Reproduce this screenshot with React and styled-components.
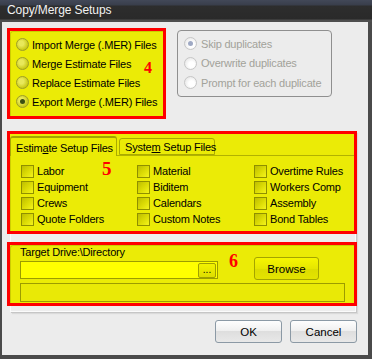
import styled, { createGlobalStyle } from 'styled-components'

const GlobalStyle = createGlobalStyle`
	html, body {
		margin: 0;
		padding: 0;
		background: #ececec;
	}
	body {
		font-family: "Liberation Sans", Arial, sans-serif;
		font-size: 11px;
		letter-spacing: -0.2px;
		color: #000;
	}
	* {
		box-sizing: border-box;
	}
`

const Window = styled.div`
	width: 372px;
	height: 359px;
	display: flex;
	flex-direction: column;
	background: #ececec;
	overflow: hidden;
`

const TitleBar = styled.div`
	height: 22px;
	flex: none;
	display: flex;
	align-items: center;
	padding: 0 0 2px 7px;
	background: linear-gradient(#424858 0, #393e4b 5px, #2d2d2d 6px, #2a2a2a 19px, #4e4e4e 20px, #4e4e4e 22px);
	color: #f2f2f2;
	font-size: 12px;
	letter-spacing: -0.1px;
`

const Frame = styled.div`
	flex: 1;
	display: flex;
	flex-direction: column;
	padding: 6px 11px 0 5px;
	border-left: 2px solid #4a4a4a;
	border-right: 4px solid #4a4a4a;
	border-bottom: 4px solid #4a4a4a;
`

const TopRow = styled.div`
	display: flex;
	gap: 11px;
	align-items: flex-start;
`

const RedBox = styled.div`
	position: relative;
	border: 3px solid #ff0000;
	background: #ebeb06;
	height: ${p => p.$h}px;
	width: ${p => (p.$w ? `${p.$w}px` : 'auto')};
	margin-top: ${p => p.$mt || 0}px;
`

const Marker = styled.span`
	position: absolute;
	left: ${p => p.$x}px;
	top: ${p => p.$y}px;
	font-family: "Liberation Serif", "Times New Roman", serif;
	font-weight: bold;
	font-size: ${p => p.$size}px;
	line-height: 1;
	letter-spacing: 0;
	color: #ff0000;
`

const YellowGroup = styled.div`
	height: 100%;
	border-top: 1px solid #cdcd00;
	border-left: 1px solid #cdcd00;
	border-top-left-radius: 3px;
	padding: ${p => p.$pad};
	display: flex;
	flex-direction: column;
`

const GreyGroup = styled.div`
	margin-top: 2px;
	width: 155px;
	height: 67px;
	border: 1px solid #8f8f8f;
	border-radius: 4px;
	padding: 3px 0 0 6px;
	display: flex;
	flex-direction: column;
`

const OptionRow = styled.label`
	height: ${p => p.$h}px;
	display: flex;
	align-items: center;
	gap: ${p => p.$gap}px;
	color: ${p => (p.$disabled ? '#a2a29a' : '#000')};
	white-space: nowrap;
`

const Radio = styled.span`
	width: 13px;
	height: 13px;
	flex: none;
	border-radius: 50%;
	display: flex;
	align-items: center;
	justify-content: center;
	border: 1px solid ${p => (p.$disabled ? '#c6c6c6' : '#9d9d2c')};
	background: ${p =>
		p.$disabled
			? 'radial-gradient(circle at 60% 60%, #ffffff 30%, #e2e2e2 90%)'
			: 'radial-gradient(circle at 40% 40%, #e8e85a 25%, #c2c208 80%)'};

	&::after {
		content: "";
		display: ${p => (p.$checked ? 'block' : 'none')};
		width: 5px;
		height: 5px;
		border-radius: 50%;
		background: ${p => (p.$disabled ? '#9fa9c4' : '#3b5012')};
	}
`

const Panel = styled.div`
	margin: 12px 0 0 3px;
	width: 346px;
	border: 1px solid #fbfbfb;
	border-top: none;
	box-shadow: 1px 1px 0 #c6c6c6, 2px 2px 1px #dadada;
	padding-bottom: 5px;
	background: #eeeeee;
`

const PanelRed = styled(RedBox)`
	margin-left: -4px;
	margin-right: -2px;
	margin-top: ${p => p.$mt || 0}px;
`

const TabStrip = styled.div`
	height: 21px;
	display: flex;
	align-items: flex-end;
	gap: 2px;
`

const Tab = styled.div`
	position: relative;
	z-index: ${p => (p.$active ? 1 : 0)};
	width: ${p => p.$w}px;
	height: ${p => (p.$active ? 20 : 17)}px;
	margin-bottom: ${p => (p.$active ? -1 : 0)}px;
	padding: ${p => (p.$active ? '1px 0 0 5px' : '0 0 0 5px')};
	display: flex;
	align-items: center;
	background: #ebeb06;
	border: 1px solid #aaaa00;
	border-top: ${p => (p.$active ? '2px solid #a3a300' : '1px solid #aaaa00')};
	border-bottom: ${p => (p.$active ? 'none' : '1px solid #aaaa00')};
	border-radius: 3px 3px 0 0;
	white-space: nowrap;

	u {
		text-decoration: underline;
		text-underline-offset: 1px;
	}
`

const TabPanel = styled.div`
	height: 76px;
	border-top: 1px solid #b2b200;
	border-left: 1px solid #cfcf00;
	padding: 7px 0 0 10px;
	display: grid;
	grid-template-columns: 116px 117px 1fr;
	grid-template-rows: repeat(4, 16px);
	grid-auto-flow: column;
`

const Check = styled.span`
	width: 13px;
	height: 13px;
	flex: none;
	border: 1px solid #8f8f00;
	background: linear-gradient(135deg, #bebe00 0%, #dada04 50%, #f4f41c 100%);
`

const TargetGroup = styled(YellowGroup)`
	padding: 0 0 0 9px;
`

const FieldLabel = styled.div`
	height: 11px;
	line-height: 12px;
`

const InputRow = styled.div`
	height: 23px;
	display: flex;
	align-items: flex-start;
`

const PathInput = styled.div`
	margin-top: 4px;
	width: 198px;
	height: 18px;
	border: 1px solid #9c9c00;
	background: #ffff00;
	display: flex;
	align-items: center;
	justify-content: flex-end;
	padding-right: 1px;
`

const DotsButton = styled.div`
	width: 18px;
	height: 15px;
	border: 1px solid #a0a000;
	border-radius: 2px;
	background: linear-gradient(#f2f200, #dede00);
	display: flex;
	align-items: flex-end;
	justify-content: center;
	padding-bottom: 2px;
	font-size: 10px;
	line-height: 1;
	letter-spacing: 0;
`

const Button = styled.div`
	width: ${p => p.$w}px;
	height: 23px;
	margin-left: ${p => p.$ml || 0}px;
	display: flex;
	align-items: center;
	justify-content: center;
	border-radius: 3px;
	border: 1px solid ${p => (p.$yellow ? '#a4a400' : '#8b99a5')};
	background: ${p =>
		p.$yellow
			? 'linear-gradient(#f6f600, #e6e600 50%, #dcdc00 51%, #e4e400)'
			: 'linear-gradient(#fefefe, #f0f0f0 45%, #dedede 50%, #e8e8e8)'};
	font-size: 11.5px;
	letter-spacing: 0;
`

const StatusField = styled.div`
	margin-top: 3px;
	width: 325px;
	height: 19px;
	border: 1px solid #9c9c00;
	background: #e9e906;
`

const ButtonRow = styled.div`
	margin-top: 8px;
	display: flex;
	justify-content: flex-end;
	gap: 8px;
`

const mergeOptions = [
	'Import Merge (.MER) Files',
	'Merge Estimate Files',
	'Replace Estimate Files',
	'Export Merge (.MER) Files',
]

const duplicateOptions = ['Skip duplicates', 'Overwrite duplicates', 'Prompt for each duplicate']

const setupFiles = [
	'Labor', 'Equipment', 'Crews', 'Quote Folders',
	'Material', 'Biditem', 'Calendars', 'Custom Notes',
	'Overtime Rules', 'Workers Comp', 'Assembly', 'Bond Tables',
]

export default function App() {
	return (
		<Window>
			<GlobalStyle />
			<TitleBar>Copy/Merge Setups</TitleBar>
			<Frame>
				<TopRow>
					<RedBox $w={159} $h={91}>
						<YellowGroup $pad="3px 0 0 5px">
							{mergeOptions.map((o, i) => (
								<OptionRow key={o} $h={19} $gap={3}>
									<Radio $checked={i === 3} />
									{o}
								</OptionRow>
							))}
						</YellowGroup>
						<Marker $x={134} $y={29} $size={16}>4</Marker>
					</RedBox>

					<GreyGroup>
						{duplicateOptions.map((o, i) => (
							<OptionRow key={o} $h={19.5} $gap={4} $disabled>
								<Radio $disabled $checked={i === 0} />
								{o}
							</OptionRow>
						))}
					</GreyGroup>
				</TopRow>

				<Panel>
					<PanelRed $h={103}>
						<TabStrip>
							<Tab $active $w={107}><span>Estim<u>a</u>te Setup Files</span></Tab>
							<Tab $w={96}><span>Syste<u>m</u> Setup Files</span></Tab>
						</TabStrip>
						<TabPanel>
							{setupFiles.map(f => (
								<OptionRow key={f} $h={16} $gap={3}>
									<Check />
									{f}
								</OptionRow>
							))}
						</TabPanel>
						<Marker $x={92} $y={25} $size={19}>5</Marker>
					</PanelRed>

					<PanelRed $h={64} $mt={8}>
						<TargetGroup>
							<FieldLabel>Target Drive:\Directory</FieldLabel>
							<InputRow>
								<PathInput>
									<DotsButton>...</DotsButton>
								</PathInput>
								<Button $yellow $w={65} $ml={36}>Browse</Button>
							</InputRow>
							<StatusField />
						</TargetGroup>
						<Marker $x={219} $y={7} $size={18}>6</Marker>
					</PanelRed>
				</Panel>

				<ButtonRow>
					<Button $w={67}>OK</Button>
					<Button $w={67}>Cancel</Button>
				</ButtonRow>
			</Frame>
		</Window>
	)
}
